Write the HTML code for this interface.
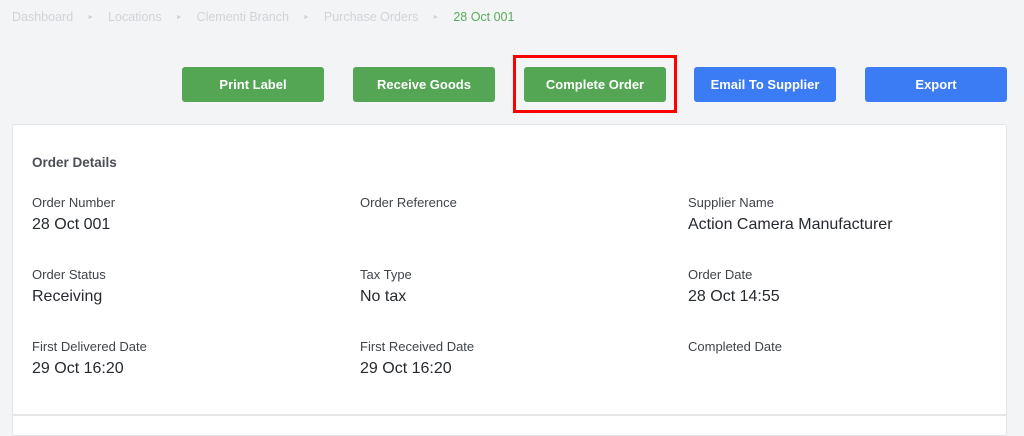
<!DOCTYPE html>
<html><head><style>
body{margin:0;width:1024px;height:426px;background:#f3f4f6;font-family:"Liberation Sans",Arial,sans-serif;position:relative;overflow:hidden}
.bc{position:absolute;top:10px;left:12px;font-size:12.5px;color:#d0d3d8;white-space:nowrap}
.bc span{margin-right:0}
.bc .sep{font-size:7px;margin:0 14px;vertical-align:2px}
.bc .cur{color:#5bab5b}
.btn{position:absolute;top:67px;width:142px;height:35px;border-radius:3px;color:#fff;font-weight:bold;font-size:13px;display:flex;align-items:center;justify-content:center}
.g{background:#54a554}.b{background:#3b7cf4}
.red{position:absolute;left:513px;top:55px;width:158px;height:52px;border:3px solid #f00}
.card{position:absolute;left:12px;top:124px;width:993px;height:310px;background:#fff;border:1px solid #e2e4e7;border-radius:3px}
.div{position:absolute;left:0;right:0;top:289px;height:2px;background:#e5e6e8}
.t{position:absolute;color:#3f444b}
.h{font-weight:bold;font-size:13.5px;color:#4a4f56}
.l{font-size:13px}
.v{font-size:16px;color:#262a2f}
</style></head><body>
<div class="bc"><span>Dashboard</span><span class="sep">►</span><span>Locations</span><span class="sep">►</span><span>Clementi Branch</span><span class="sep">►</span><span>Purchase Orders</span><span class="sep">►</span><span class="cur">28 Oct 001</span></div>
<div class="btn g" style="left:182px">Print Label</div>
<div class="btn g" style="left:353px">Receive Goods</div>
<div class="btn g" style="left:524px">Complete Order</div>
<div class="red"></div>
<div class="btn b" style="left:694px">Email To Supplier</div>
<div class="btn b" style="left:865px">Export</div>
<div class="card">
<div class="div"></div>
<div class="t h" style="left:19px;top:30px">Order Details</div>
<div class="t l" style="left:19px;top:70px">Order Number</div>
<div class="t v" style="left:19px;top:91px">28 Oct 001</div>
<div class="t l" style="left:347px;top:70px">Order Reference</div>
<div class="t l" style="left:675px;top:70px">Supplier Name</div>
<div class="t v" style="left:675px;top:91px">Action Camera Manufacturer</div>
<div class="t l" style="left:19px;top:142px">Order Status</div>
<div class="t v" style="left:19px;top:163px">Receiving</div>
<div class="t l" style="left:347px;top:142px">Tax Type</div>
<div class="t v" style="left:347px;top:163px">No tax</div>
<div class="t l" style="left:675px;top:142px">Order Date</div>
<div class="t v" style="left:675px;top:163px">28 Oct 14:55</div>
<div class="t l" style="left:19px;top:214px">First Delivered Date</div>
<div class="t v" style="left:19px;top:235px">29 Oct 16:20</div>
<div class="t l" style="left:347px;top:214px">First Received Date</div>
<div class="t v" style="left:347px;top:235px">29 Oct 16:20</div>
<div class="t l" style="left:675px;top:214px">Completed Date</div>
</div>
</body></html>
